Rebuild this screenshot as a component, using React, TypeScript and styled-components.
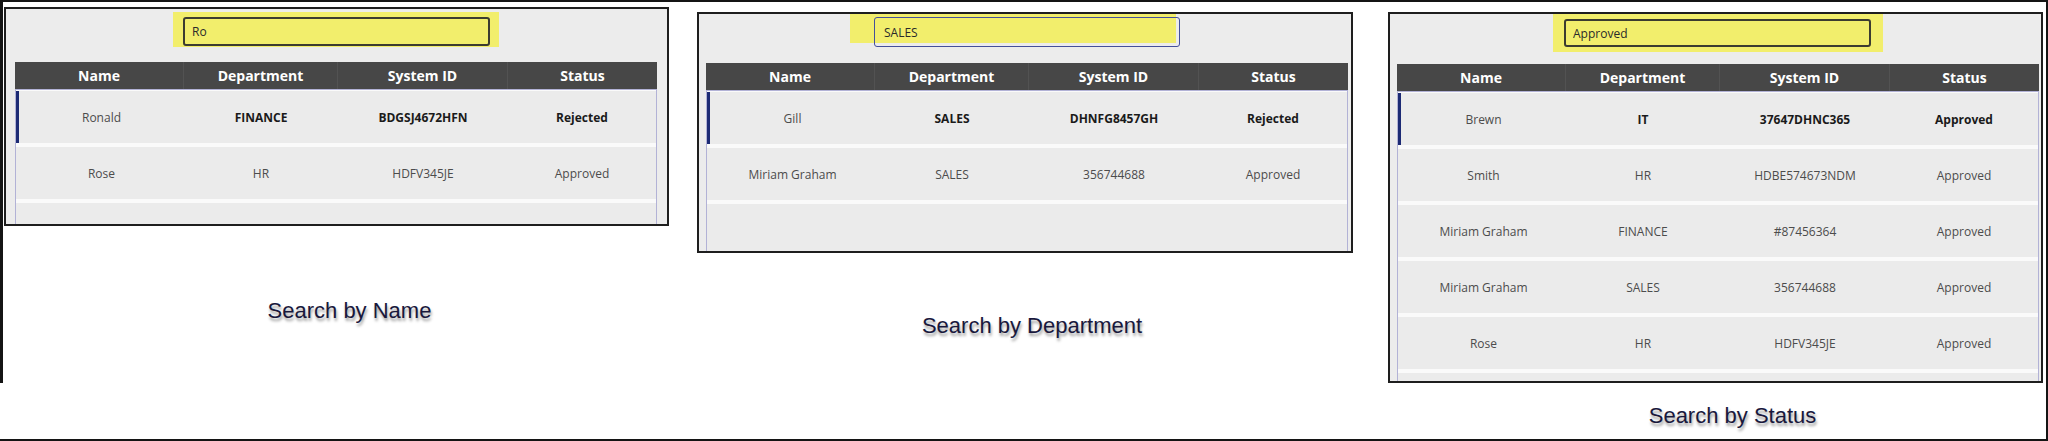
import React from "react";
import styled, { createGlobalStyle } from "styled-components";

const GlobalStyle = createGlobalStyle`
  html, body { margin: 0; padding: 0; background: #ffffff; }
  body { font-family: "Open Sans", "Liberation Sans", sans-serif; }
`;

const Frame = styled.div`
  width: 2048px;
  height: 441px;
  box-sizing: border-box;
  border-top: 2px solid #141414;
  border-right: 2px solid #141414;
  border-bottom: 2px solid #141414;
  background: linear-gradient(#141414, #141414) left top / 3px 381px no-repeat, #ffffff;
  display: flex;
  align-items: flex-start;
  overflow: hidden;
`;

const Column = styled.section<{ $left: number; $top: number; $width: number }>`
  flex: 0 0 auto;
  width: ${(p) => p.$width}px;
  margin-left: ${(p) => p.$left}px;
  padding-top: ${(p) => p.$top}px;
  display: flex;
  flex-direction: column;
`;

const Panel = styled.div<{ $height: number }>`
  height: ${(p) => p.$height}px;
  box-sizing: border-box;
  border: 2px solid #1e1e1e;
  background: #ececec;
  display: flex;
  flex-direction: column;
  overflow: hidden;
`;

const SearchRow = styled.div<{ $height: number; $x: number }>`
  flex: 0 0 auto;
  height: ${(p) => p.$height}px;
  padding-left: ${(p) => p.$x}px;
  display: flex;
  align-items: flex-start;
`;

const Highlight = styled.div<{ $pad: string; $top: number }>`
  display: flex;
  margin-top: ${(p) => p.$top}px;
  padding: ${(p) => p.$pad};
  background: #f2ee6c;
`;

const SearchInput = styled.input<{ $w: number; $h: number; $focus?: boolean; $margin: string }>`
  width: ${(p) => p.$w}px;
  height: ${(p) => p.$h}px;
  margin: ${(p) => p.$margin};
  box-sizing: border-box;
  border: ${(p) => (p.$focus ? "1px solid #44509a" : "2px solid #3c3c30")};
  border-radius: 3px;
  background: transparent;
  padding: 0 ${(p) => (p.$focus ? 9 : 7)}px;
  font-family: "Open Sans", "Liberation Sans", sans-serif;
  font-size: 12px;
  color: #2a2a2a;
  outline: none;
`;

const Table = styled.div<{ $left: number }>`
  flex: 1 1 auto;
  min-height: 0;
  width: 642px;
  margin-left: ${(p) => p.$left}px;
  display: flex;
  flex-direction: column;
`;

const cols = "168px 154px 170px 1fr";

const HeaderBar = styled.div`
  flex: 0 0 auto;
  height: 27px;
  background: #474747;
  display: grid;
  grid-template-columns: ${cols};
`;

const HeaderCell = styled.div`
  display: flex;
  align-items: center;
  justify-content: center;
  color: #ffffff;
  font-family: "Open Sans", "Liberation Sans", sans-serif;
  font-weight: 700;
  font-size: 14px;
  & + & { border-left: 1px solid #525252; }
`;

const Gallery = styled.div`
  flex: 1 1 auto;
  min-height: 0;
  border: 1px solid #b2b2d6;
  border-bottom: none;
  background: #fafafa;
  padding-top: 1px;
  overflow: hidden;
`;

const Row = styled.div<{ $selected?: boolean }>`
  height: 52px;
  margin-bottom: 4px;
  box-sizing: border-box;
  background: #ebebeb;
  border-left: 3px solid ${(p) => (p.$selected ? "#1c2a74" : "transparent")};
  display: grid;
  grid-template-columns: 165px 154px 170px 1fr;
  align-items: center;
`;

const Cell = styled.div<{ $strong?: boolean }>`
  text-align: center;
  white-space: nowrap;
  font-family: "Open Sans", "Liberation Sans", sans-serif;
  font-size: 12px;
  font-weight: ${(p) => (p.$strong ? 700 : 400)};
  color: ${(p) => (p.$strong ? "#1a1a1a" : "#4c4c4c")};
`;

const Caption = styled.div<{ $top: number; $shift: number }>`
  margin-top: ${(p) => p.$top}px;
  padding-left: ${(p) => p.$shift}px;
  text-align: center;
  font-family: "Liberation Sans", Arial, sans-serif;
  font-size: 22px;
  color: #19183c;
  text-shadow: 1px 3px 3px rgba(0, 0, 0, 0.4);
`;

type Rec = [string, string, string, string];

interface PanelSpec {
  left: number;
  top: number;
  width: number;
  height: number;
  searchH: number;
  searchX: number;
  hlTop: number;
  hlPad: string;
  inputW: number;
  inputH: number;
  inputMargin: string;
  focus?: boolean;
  query: string;
  tableLeft: number;
  rows: Rec[];
  caption: string;
  capTop: number;
  capShift: number;
}

const headers = ["Name", "Department", "System ID", "Status"];

const panels: PanelSpec[] = [
  {
    left: 4, top: 5, width: 665, height: 219,
    searchH: 53, searchX: 167, hlTop: 3, hlPad: "5px 9px 1px 10px",
    inputW: 307, inputH: 29, inputMargin: "0",
    query: "Ro", tableLeft: 9,
    rows: [
      ["Ronald", "FINANCE", "BDGSJ4672HFN", "Rejected"],
      ["Rose", "HR", "HDFV345JE", "Approved"],
      ["", "", "", ""],
    ],
    caption: "Search by Name", capTop: 72, capShift: 26,
  },
  {
    left: 28, top: 10, width: 656, height: 241,
    searchH: 49, searchX: 151, hlTop: 0, hlPad: "3px 0 0 24px",
    inputW: 306, inputH: 30, inputMargin: "0 -4px -4px 0", focus: true,
    query: "SALES", tableLeft: 7,
    rows: [
      ["Gill", "SALES", "DHNFG8457GH", "Rejected"],
      ["Miriam Graham", "SALES", "356744688", "Approved"],
      ["", "", "", ""],
    ],
    caption: "Search by Department", capTop: 60, capShift: 14,
  },
  {
    left: 35, top: 10, width: 655, height: 371,
    searchH: 50, searchX: 163, hlTop: 0, hlPad: "5px 12px 5px 11px",
    inputW: 307, inputH: 28, inputMargin: "0",
    query: "Approved", tableLeft: 7,
    rows: [
      ["Brewn", "IT", "37647DHNC365", "Approved"],
      ["Smith", "HR", "HDBE574673NDM", "Approved"],
      ["Miriam Graham", "FINANCE", "#87456364", "Approved"],
      ["Miriam Graham", "SALES", "356744688", "Approved"],
      ["Rose", "HR", "HDFV345JE", "Approved"],
      ["", "", "", ""],
    ],
    caption: "Search by Status", capTop: 20, capShift: 34,
  },
];

function SearchPanel({ spec }: { spec: PanelSpec }) {
  return (
    <Column $left={spec.left} $top={spec.top} $width={spec.width}>
      <Panel $height={spec.height}>
        <SearchRow $height={spec.searchH} $x={spec.searchX}>
          <Highlight $pad={spec.hlPad} $top={spec.hlTop}>
            <SearchInput
              readOnly
              value={spec.query}
              $w={spec.inputW}
              $h={spec.inputH}
              $margin={spec.inputMargin}
              $focus={spec.focus}
            />
          </Highlight>
        </SearchRow>
        <Table $left={spec.tableLeft}>
          <HeaderBar>
            {headers.map((h) => (
              <HeaderCell key={h}>{h}</HeaderCell>
            ))}
          </HeaderBar>
          <Gallery>
            {spec.rows.map((r, i) => (
              <Row key={i} $selected={i === 0}>
                {r.map((c, j) => (
                  <Cell key={j} $strong={i === 0 && j > 0}>
                    {c}
                  </Cell>
                ))}
              </Row>
            ))}
          </Gallery>
        </Table>
      </Panel>
      <Caption $top={spec.capTop} $shift={spec.capShift}>
        {spec.caption}
      </Caption>
    </Column>
  );
}

export default function App() {
  return (
    <>
      <GlobalStyle />
      <Frame>
        {panels.map((p) => (
          <SearchPanel key={p.caption} spec={p} />
        ))}
      </Frame>
    </>
  );
}
